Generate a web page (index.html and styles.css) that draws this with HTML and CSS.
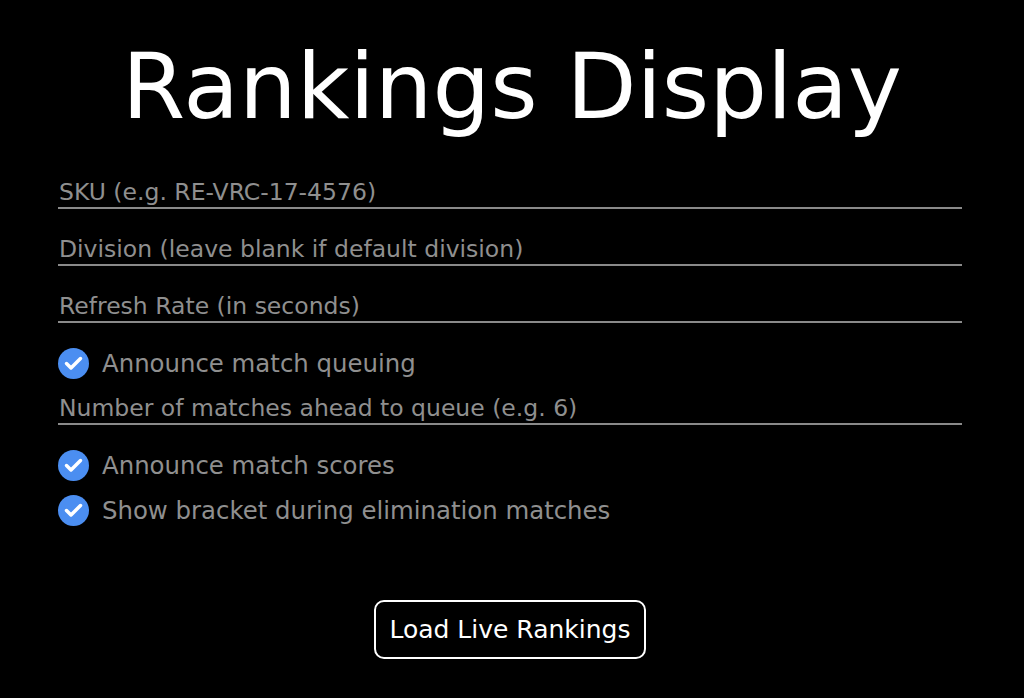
FILE: index.html
```html
<!DOCTYPE html>
<html lang="en">
<head>
    <meta charset="UTF-8">
    <meta name="viewport" content="width=device-width, initial-scale=1.0">
    <title>Rankings Display</title>
    <link rel="stylesheet" href="styles.css">
</head>
<body>

<h1 class="title">Rankings Display</h1>

<form class="settings">
    <input class="field" type="text" id="sku" placeholder="SKU (e.g. RE-VRC-17-4576)">
    <input class="field" type="text" id="division" placeholder="Division (leave blank if default division)">
    <input class="field" type="text" id="refresh" placeholder="Refresh Rate (in seconds)">

    <label class="check">
        <input type="checkbox" checked>
        <svg class="check-icon" viewBox="0 0 31 31"><circle cx="15.5" cy="15.5" r="15.5"/><polyline points="8.5,15.5 13,20 22.5,10.5"/></svg>
        <span>Announce match queuing</span>
    </label>
    <input class="field" type="text" id="queue" placeholder="Number of matches ahead to queue (e.g. 6)">

    <label class="check">
        <input type="checkbox" checked>
        <svg class="check-icon" viewBox="0 0 31 31"><circle cx="15.5" cy="15.5" r="15.5"/><polyline points="8.5,15.5 13,20 22.5,10.5"/></svg>
        <span>Announce match scores</span>
    </label>
    <label class="check">
        <input type="checkbox" checked>
        <svg class="check-icon" viewBox="0 0 31 31"><circle cx="15.5" cy="15.5" r="15.5"/><polyline points="8.5,15.5 13,20 22.5,10.5"/></svg>
        <span>Show bracket during elimination matches</span>
    </label>

    <div class="actions">
        <button type="button" class="load-btn">Load Live Rankings</button>
    </div>
</form>

</body>
</html>
```
FILE: styles.css
```css
/* Basic Reset */
* {
    margin: 0;
    padding: 0;
    box-sizing: border-box;
}

body {
    font-family: 'DejaVu Sans', sans-serif;
    background-color: #000;
    color: #fff;
}

/* Title */
.title {
    font-size: 91px;
    font-weight: normal;
    line-height: 91px;
    text-align: center;
    margin-top: 41px;
    margin-bottom: 45px;
}

/* Form */
.settings {
    display: flex;
    flex-direction: column;
    padding: 0 62px 0 58px;
}

.field {
    width: 100%;
    height: 32px;
    padding: 0 0 0 1px;
    margin-bottom: 25px;
    background: transparent;
    border: none;
    border-bottom: 2px solid #8a8a8a;
    color: #ddd;
    font-family: 'DejaVu Sans', sans-serif;
    font-size: 23.5px;
    outline: none;
}

.field::placeholder {
    color: #8f8f8f;
}

/* Checkboxes */
.check {
    display: flex;
    align-items: center;
    gap: 13px;
    height: 31px;
    margin-bottom: 14px;
    color: #8f8f8f;
    font-size: 24.4px;
    cursor: pointer;
}

.check input {
    display: none;
}

.check-icon {
    width: 31px;
    height: 31px;
    flex-shrink: 0;
}

.check-icon circle {
    fill: #4b8ef1;
}

.check-icon polyline {
    fill: none;
    stroke: #fff;
    stroke-width: 3.5;
    stroke-linecap: round;
    stroke-linejoin: round;
}

/* Button */
.actions {
    display: flex;
    justify-content: center;
    margin-top: 60px;
}

.load-btn {
    height: 59px;
    padding: 0 13px;
    background: #000;
    color: #fff;
    border: 2px solid #fff;
    border-radius: 10px;
    font-family: 'DejaVu Sans', sans-serif;
    font-size: 25px;
    cursor: pointer;
}
```
